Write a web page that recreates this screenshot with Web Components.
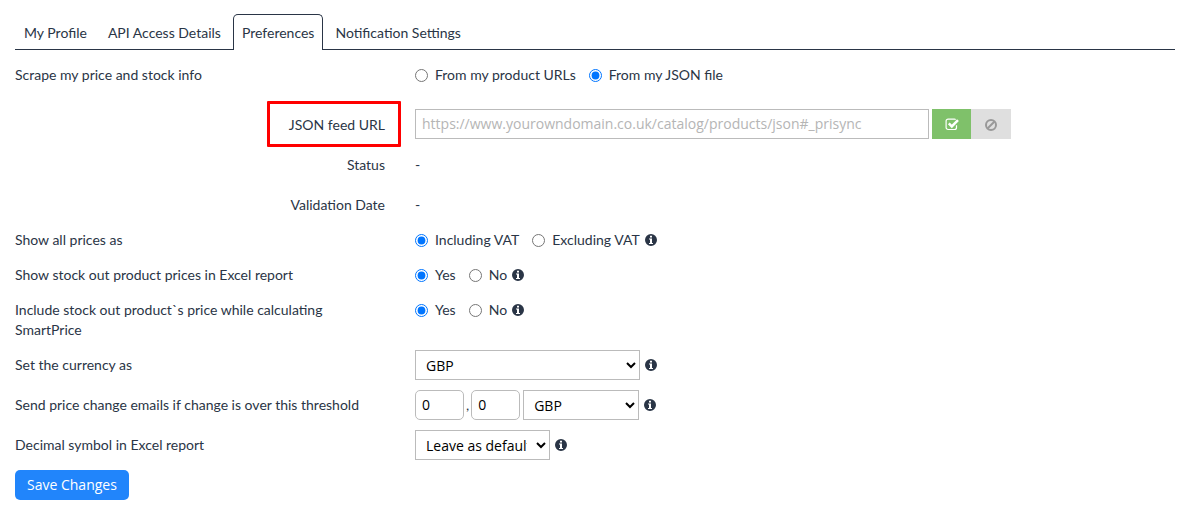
<!DOCTYPE html>
<html lang="en">
<head>
<meta charset="utf-8">
<meta name="viewport" content="width=device-width, initial-scale=1">
<title>Preferences</title>
<style>
  body {
    margin: 0;
    background: #fff;
    color: #2a3546;
    font: 14px/20px Lato, "Liberation Sans", sans-serif;
    --line-color: #2a3546;
    --border-color: #bbb;
    --control-font: 14px/20px "Open Sans", "Noto Sans", sans-serif;
  }
</style>
</head>
<body>
<settings-page></settings-page>

<script>
// --- InfoIcon Component ---
class InfoIcon extends HTMLElement {
  constructor() {
    super();
    this.attachShadow({ mode: 'open' });
    this.shadowRoot.innerHTML = `
      <style>
        :host { display: flex; flex: none; }
        svg { display: block; width: 12px; height: 12px; fill: currentColor; }
      </style>
      <svg viewBox="0 0 12 12" aria-hidden="true">
        <path fill-rule="evenodd" d="M6 0a6 6 0 1 1 0 12A6 6 0 0 1 6 0zM5 1.8v1.6h2V1.8zM4 4.4v1.1h1v3.4H4V10h4V8.9H7V4.4z"/>
      </svg>
    `;
  }
}
customElements.define('info-icon', InfoIcon);

// --- TabBar Component ---
class TabBar extends HTMLElement {
  constructor() {
    super();
    this.attachShadow({ mode: 'open' });
    this.shadowRoot.innerHTML = `
      <style>
        :host { display: block; border-bottom: 1px solid var(--line-color); }
        nav { display: flex; gap: 3px; margin-bottom: -1px; }
        ::slotted(a) {
          padding: 8px 8px 7px;
          border: 1px solid transparent;
          border-bottom: 0;
          border-radius: 5px 5px 0 0;
          color: inherit;
          text-decoration: none;
        }
        ::slotted(a[aria-current]) {
          border-color: var(--line-color);
          background: #fff;
        }
      </style>
      <nav><slot></slot></nav>
    `;
  }
}
customElements.define('tab-bar', TabBar);

// --- SettingRow Component ---
class SettingRow extends HTMLElement {
  constructor() {
    super();
    this.attachShadow({ mode: 'open' });
    this.shadowRoot.innerHTML = `
      <style>
        :host {
          display: grid;
          grid-template-columns: 370px minmax(0, 1fr);
          column-gap: 30px;
          align-items: start;
          min-height: 25px;
        }
        :host([tall]) { min-height: 30px; align-items: center; }
        :host([nested]) .label { text-align: right; }
        .content { display: flex; align-items: center; gap: 5px; min-height: 20px; }
      </style>
      <div class="label"><slot name="label"></slot></div>
      <div class="content"><slot></slot></div>
    `;
  }
}
customElements.define('setting-row', SettingRow);

// --- RadioChoice Component ---
class RadioChoice extends HTMLElement {
  constructor() {
    super();
    this.attachShadow({ mode: 'open' });
  }

  connectedCallback() {
    this._render();
  }

  _render() {
    const options = this.getAttribute('options').split('|');
    const selected = this.getAttribute('selected');
    this.shadowRoot.innerHTML = `
      <style>
        :host { display: flex; }
        .options { display: flex; gap: 13px; }
        label { display: flex; align-items: center; gap: 7px; }
        input { width: 13px; height: 13px; margin: 0; }
      </style>
      <div class="options" role="radiogroup" aria-label="${this.getAttribute('label')}">
        ${options.map(option => `
          <label><input type="radio" name="choice" value="${option}" ${option === selected ? 'checked' : ''}>${option}</label>
        `).join('')}
      </div>
    `;
  }
}
customElements.define('radio-choice', RadioChoice);

// --- FeedField Component ---
class FeedField extends HTMLElement {
  constructor() {
    super();
    this.attachShadow({ mode: 'open' });
    this.shadowRoot.innerHTML = `
      <style>
        :host { display: flex; flex: 0 1 596px; min-width: 0; gap: 3px; }
        ::slotted(input) { flex: 1; }
        .actions { display: flex; }
        button {
          display: flex;
          align-items: center;
          justify-content: center;
          width: 39px;
          height: 30px;
          padding: 0;
          border: 0;
        }
        .validate { background: #7fc16a; color: #fff; }
        .cancel { width: 40px; background: #dfdfdf; color: #999; }
        svg { display: block; width: 14px; height: 14px; }
      </style>
      <slot></slot>
      <div class="actions">
        <button class="validate" type="button" aria-label="Validate">
          <svg viewBox="0 0 14 14" fill="none" stroke="currentColor">
            <path d="M11.5 8.2v2.3a2 2 0 0 1-2 2h-6.400a2 2 0 0 1-2-2v-6.400a2 2 0 0 1 2-2h6.400q.7 0 1.200.3" stroke-width="1.200"/>
            <path d="M3.800 6.400l3 3L13 3.200" stroke-width="2.500"/>
          </svg>
        </button>
        <button class="cancel" type="button" aria-label="Cancel">
          <svg viewBox="0 0 14 14" fill="none" stroke="currentColor" stroke-width="2">
            <circle cx="7" cy="8" r="5"/>
            <path d="M3.500 11.500l7-7"/>
          </svg>
        </button>
      </div>
    `;
  }
}
customElements.define('feed-field', FeedField);

// --- SettingsPage Component ---
class SettingsPage extends HTMLElement {
  constructor() {
    super();
    this.attachShadow({ mode: 'open' });
    this.shadowRoot.innerHTML = `
      <style>
        :host { display: block; padding: 14px 5px 8px 15px; }
        form { display: flex; flex-direction: column; align-items: stretch; gap: 10px; margin-top: 15px; }
        .feed { display: flex; flex-direction: column; gap: 10px; padding-top: 9px; }
        .feed-row { min-height: 31px; align-items: start; }
        .feed-row label { display: inline-block; margin-top: 6px; }
        .highlight { position: relative; }
        .highlight::after {
          content: "";
          position: absolute;
          inset: -14px -16px -12px -22px;
          border: 3px solid #f00;
          border-radius: 1px;
          pointer-events: none;
        }
        input, select {
          box-sizing: border-box;
          height: 30px;
          min-width: 0;
          margin: 0;
          border: 1px solid var(--border-color);
          border-radius: 0;
          background-color: #fff;
          color: #000;
          font: var(--control-font);
        }
        input { padding: 3px 6px 5px; }
        input::placeholder { color: #b5b5b5; }
        select { padding: 4px 6px; }
        .threshold { display: flex; align-items: center; }
        .threshold input { width: 49px; border-radius: 5px; }
        .threshold span { padding: 0 2px; }
        .threshold select { width: 116px; margin-left: 3px; padding-right: 0; }
        .currency { width: 225px; padding-right: 0; }
        .decimal { width: 135px; }
        .save {
          align-self: flex-start;
          height: 30px;
          padding: 0 12px;
          border: 0;
          border-radius: 5px;
          background: #2185fb;
          color: #fff;
          font: var(--control-font);
        }
      </style>
      <tab-bar>
        <a href="#profile">My Profile</a>
        <a href="#api">API Access Details</a>
        <a href="#preferences" aria-current="page">Preferences</a>
        <a href="#notifications">Notification Settings</a>
      </tab-bar>
      <form>
        <setting-row>
          <span slot="label">Scrape my price and stock info</span>
          <radio-choice label="Scrape my price and stock info" options="From my product URLs|From my JSON file" selected="From my JSON file"></radio-choice>
        </setting-row>
        <div class="feed">
          <setting-row class="feed-row" nested tall>
            <label slot="label" for="feed-url" class="highlight">JSON feed URL</label>
            <feed-field>
              <input id="feed-url" type="url" placeholder="https://www.yourowndomain.co.uk/catalog/products/json#_prisync">
            </feed-field>
          </setting-row>
          <setting-row nested tall>
            <span slot="label">Status</span>
            <span>-</span>
          </setting-row>
          <setting-row nested tall>
            <span slot="label">Validation Date</span>
            <span>-</span>
          </setting-row>
        </div>
        <setting-row>
          <span slot="label">Show all prices as</span>
          <radio-choice label="Show all prices as" options="Including VAT|Excluding VAT" selected="Including VAT"></radio-choice>
          <info-icon></info-icon>
        </setting-row>
        <setting-row>
          <span slot="label">Show stock out product prices in Excel report</span>
          <radio-choice label="Show stock out product prices in Excel report" options="Yes|No" selected="Yes"></radio-choice>
          <info-icon></info-icon>
        </setting-row>
        <setting-row>
          <span slot="label">Include stock out product\`s price while calculating SmartPrice</span>
          <radio-choice label="Include stock out product\`s price while calculating SmartPrice" options="Yes|No" selected="Yes"></radio-choice>
          <info-icon></info-icon>
        </setting-row>
        <setting-row tall>
          <label slot="label" for="currency">Set the currency as</label>
          <select id="currency" class="currency"><option>GBP</option></select>
          <info-icon></info-icon>
        </setting-row>
        <setting-row tall>
          <label slot="label" for="threshold">Send price change emails if change is over this threshold</label>
          <div class="threshold">
            <input id="threshold" type="text" value="0">
            <span>,</span>
            <input type="text" value="0" aria-label="Threshold decimals">
            <select aria-label="Threshold currency"><option>GBP</option></select>
          </div>
          <info-icon></info-icon>
        </setting-row>
        <setting-row tall>
          <label slot="label" for="decimal">Decimal symbol in Excel report</label>
          <select id="decimal" class="decimal"><option>Leave as default</option></select>
          <info-icon></info-icon>
        </setting-row>
        <button class="save" type="button">Save Changes</button>
      </form>
    `;
  }
}
customElements.define('settings-page', SettingsPage);
</script>
</body>
</html>
